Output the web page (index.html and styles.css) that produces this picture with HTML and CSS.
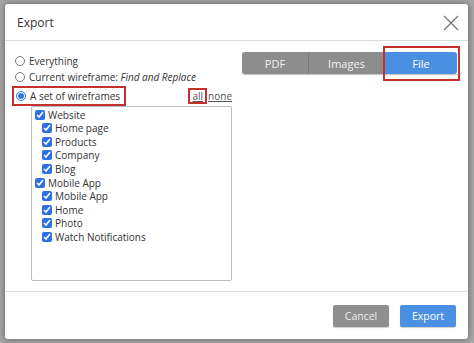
FILE: index.html
```html
<!DOCTYPE html>
<html lang="en">
<head>
  <meta charset="UTF-8" />
  <title>Export</title>
  <link rel="stylesheet" href="styles.css">
</head>
<body>

<div class="dialog">
  <div class="dialog-header">
    <div class="dialog-title">Export</div>
    <svg class="close-icon" width="16" height="16" viewBox="0 0 16 16">
      <path d="M1 1 L15 15 M15 1 L1 15" stroke="#777" stroke-width="1.3" fill="none"/>
    </svg>
  </div>

  <div class="dialog-body">
    <div class="left-col">
      <label class="option"><input type="radio" name="scope"> Everything</label>
      <label class="option"><input type="radio" name="scope"> Current wireframe:&nbsp;<i>Find and Replace</i></label>
      <div class="option-row">
        <label class="option marked"><input type="radio" name="scope" checked> A set of wireframes</label>
        <div class="links">
          <a class="marked-link">all</a><a>none</a>
        </div>
      </div>

      <div class="tree">
        <label class="item"><input type="checkbox" checked> Website</label>
        <label class="item child"><input type="checkbox" checked> Home page</label>
        <label class="item child"><input type="checkbox" checked> Products</label>
        <label class="item child"><input type="checkbox" checked> Company</label>
        <label class="item child"><input type="checkbox" checked> Blog</label>
        <label class="item"><input type="checkbox" checked> Mobile App</label>
        <label class="item child"><input type="checkbox" checked> Mobile App</label>
        <label class="item child"><input type="checkbox" checked> Home</label>
        <label class="item child"><input type="checkbox" checked> Photo</label>
        <label class="item child"><input type="checkbox" checked> Watch Notifications</label>
      </div>
    </div>

    <div class="right-col">
      <div class="segmented">
        <div class="seg">PDF</div>
        <div class="seg">Images</div>
        <div class="seg active">File</div>
      </div>
    </div>
  </div>

  <div class="dialog-footer">
    <button class="btn btn-grey">Cancel</button>
    <button class="btn btn-blue">Export</button>
  </div>
</div>

</body>
</html>
```

FILE: styles.css
```css
* { box-sizing: border-box; }

body {
  margin: 0;
  width: 474px;
  height: 343px;
  overflow: hidden;
  font-family: 'Open Sans', sans-serif;
  color: #333;
  background: #a6a6a6;
}

.dialog {
  margin: 4px 0 0 5px;
  width: 463px;
  height: 335px;
  background: #fff;
  border-radius: 3px;
  box-shadow: 0 0 6px rgba(0,0,0,0.45);
  display: flex;
  flex-direction: column;
}

.dialog-header {
  height: 37px;
  border-bottom: 1px solid #dcdcdc;
  padding: 0 9px 0 12px;
  display: flex;
  align-items: center;
  justify-content: space-between;
}

.dialog-title {
  font-size: 12px;
  padding-top: 1px;
}

.close-icon {
  margin-top: 2px;
}

.dialog-body {
  height: 251px;
  border-bottom: 1px solid #dcdcdc;
  display: flex;
}

.left-col {
  width: 232px;
  padding: 12px 5px 0 7px;
  display: flex;
  flex-direction: column;
}

.option {
  display: flex;
  align-items: center;
  font-size: 10px;
  height: 16px;
  padding-left: 3px;
  white-space: nowrap;
}

.option input {
  margin: 0 4px 0 0;
  width: 10px;
  height: 10px;
  accent-color: #2f7be6;
}

.option-row {
  display: flex;
  justify-content: space-between;
  align-items: center;
  margin-top: 1px;
}

.marked {
  border: 2px solid #c4302b;
  height: 20px;
  padding: 0 4px 0 2px;
}

.links {
  display: flex;
  align-items: center;
  font-size: 10px;
  color: #555;
}

.links a {
  text-decoration: underline;
}

.marked-link {
  border: 2px solid #c4302b;
  padding: 0 2px;
  margin-right: 1px;
  line-height: 12px;
}

.tree {
  margin: 0 0 0 19px;
  height: 175px;
  border: 1px solid #bcbcbc;
  border-radius: 2px;
  padding: 1px 0 0 2px;
}

.item {
  display: flex;
  align-items: center;
  font-size: 10px;
  height: 13.55px;
  white-space: nowrap;
}

.item input {
  margin: 0 3px 0 1px;
  width: 10px;
  height: 10px;
  accent-color: #2f6fe4;
}

.item.child {
  padding-left: 7px;
}

.right-col {
  flex: 1;
  padding: 11px 6px 0 5px;
}

.segmented {
  display: flex;
  height: 22px;
  border-radius: 3px;
  box-shadow: 0 1px 1px rgba(0,0,0,0.25);
}

.seg {
  display: flex;
  align-items: center;
  justify-content: center;
  font-size: 11px;
  color: #f2f2f2;
  background: #8d8d8d;
  position: relative;
}

.seg:nth-child(1) {
  width: 67px;
  border-radius: 3px 0 0 3px;
  border-right: 1px solid #7b7b7b;
}

.seg:nth-child(2) {
  width: 76px;
  border-right: 1px solid #7b7b7b;
}

.seg.active {
  width: 72px;
  background: #4a90e2;
  color: #fff;
  border-radius: 0 3px 3px 0;
}

.seg.active::after {
  content: "";
  position: absolute;
  top: -6px;
  bottom: -7px;
  left: -2px;
  right: -3px;
  border: 2px solid #c4302b;
}

.dialog-footer {
  flex: 1;
  display: flex;
  align-items: center;
  justify-content: flex-end;
  gap: 11px;
  padding: 0 12px 0 0;
}

.btn {
  width: 56px;
  height: 22px;
  border: none;
  border-radius: 2px;
  font-family: 'Open Sans', sans-serif;
  font-size: 10.5px;
  color: #fff;
  box-shadow: 0 1px 1px rgba(0,0,0,0.2);
}

.btn-grey {
  background: #8f8f8f;
  color: #eee;
}

.btn-blue {
  background: #4a90e2;
}
```
